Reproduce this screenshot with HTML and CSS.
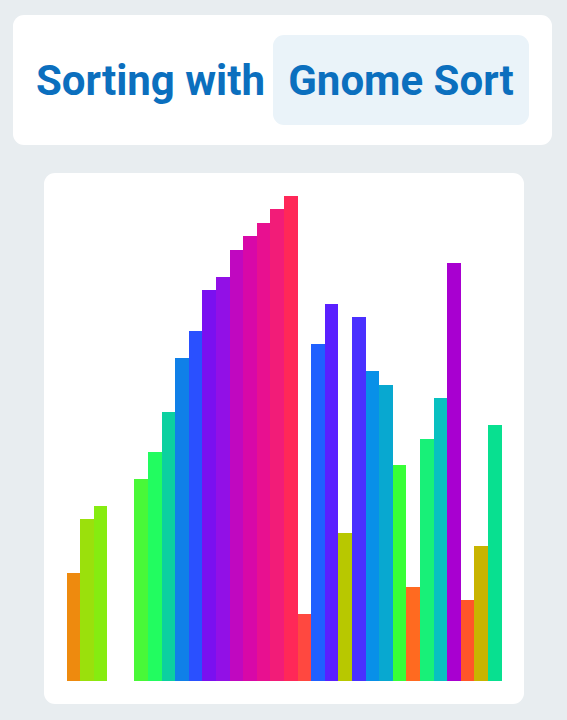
FILE: index.html
```html
<!DOCTYPE html>
<html>
<head>
<meta charset="utf-8">
<link rel="stylesheet" href="styles.css">
</head>
<body>
<div class="page">
  <header class="head">
    <h1 class="title">Sorting with</h1>
    <div class="pill">Gnome Sort</div>
  </header>
  <section class="chart-card">
    <div class="chart">
      <div class="bar" style="height:22.22%;background:#ee8a0e"></div>
      <div class="bar" style="height:33.33%;background:#9be00c"></div>
      <div class="bar" style="height:36.11%;background:#86ec10"></div>
      <div class="bar" style="height:0%"></div>
      <div class="bar" style="height:0%"></div>
      <div class="bar" style="height:41.67%;background:#48f838"></div>
      <div class="bar" style="height:47.22%;background:#22fc60"></div>
      <div class="bar" style="height:55.56%;background:#0cd0a0"></div>
      <div class="bar" style="height:66.67%;background:#1080e8"></div>
      <div class="bar" style="height:72.22%;background:#2a50ff"></div>
      <div class="bar" style="height:80.56%;background:#7a10f0"></div>
      <div class="bar" style="height:83.33%;background:#9210e6"></div>
      <div class="bar" style="height:88.89%;background:#c008c0"></div>
      <div class="bar" style="height:91.67%;background:#d808a8"></div>
      <div class="bar" style="height:94.44%;background:#e81090"></div>
      <div class="bar" style="height:97.22%;background:#f21c78"></div>
      <div class="bar" style="height:100%;background:#ff2858"></div>
      <div class="bar" style="height:13.89%;background:#ff4840"></div>
      <div class="bar" style="height:69.44%;background:#2060ff"></div>
      <div class="bar" style="height:77.78%;background:#5a20ff"></div>
      <div class="bar" style="height:30.56%;background:#b8c800"></div>
      <div class="bar" style="height:75%;background:#4a30ff"></div>
      <div class="bar" style="height:63.89%;background:#0890e8"></div>
      <div class="bar" style="height:61.11%;background:#08a8d0"></div>
      <div class="bar" style="height:44.44%;background:#38ff38"></div>
      <div class="bar" style="height:19.44%;background:#ff6a20"></div>
      <div class="bar" style="height:50%;background:#18f078"></div>
      <div class="bar" style="height:58.33%;background:#08c0c0"></div>
      <div class="bar" style="height:86.11%;background:#a800d0"></div>
      <div class="bar" style="height:16.67%;background:#ff5528"></div>
      <div class="bar" style="height:27.78%;background:#c8b400"></div>
      <div class="bar" style="height:52.78%;background:#08e090"></div>
    </div>
  </section>
</div>
</body>
</html>
```

FILE: styles.css
```css
html, body {
  margin: 0;
  padding: 0;
  background: #e8edf0;
  font-family: Roboto, "Liberation Sans", sans-serif;
}

.page {
  padding: 15px 15px 0 13px;
}

.head {
  background: #ffffff;
  border-radius: 11px;
  height: 130px;
  box-sizing: border-box;
  padding: 0 23px 0 23px;
  display: flex;
  align-items: center;
  justify-content: space-between;
}

.title {
  margin: 0;
  font-size: 42px;
  font-weight: 700;
  color: #0b6fbe;
  letter-spacing: 0;
}

.pill {
  background: #eaf3f9;
  border-radius: 11px;
  height: 90px;
  width: 256px;
  box-sizing: border-box;
  display: flex;
  align-items: center;
  justify-content: center;
  font-size: 42px;
  font-weight: 700;
  color: #0b6fbe;
}

.chart-card {
  width: 480px;
  margin: 28px auto 0;
  position: relative;
  left: 1px;
  background: #ffffff;
  border-radius: 11px;
  box-sizing: border-box;
  padding: 23px 22px 23px 23px;
}

.chart {
  height: 485px;
  display: flex;
  align-items: flex-end;
}

.bar {
  flex: 1 1 0;
}
```
